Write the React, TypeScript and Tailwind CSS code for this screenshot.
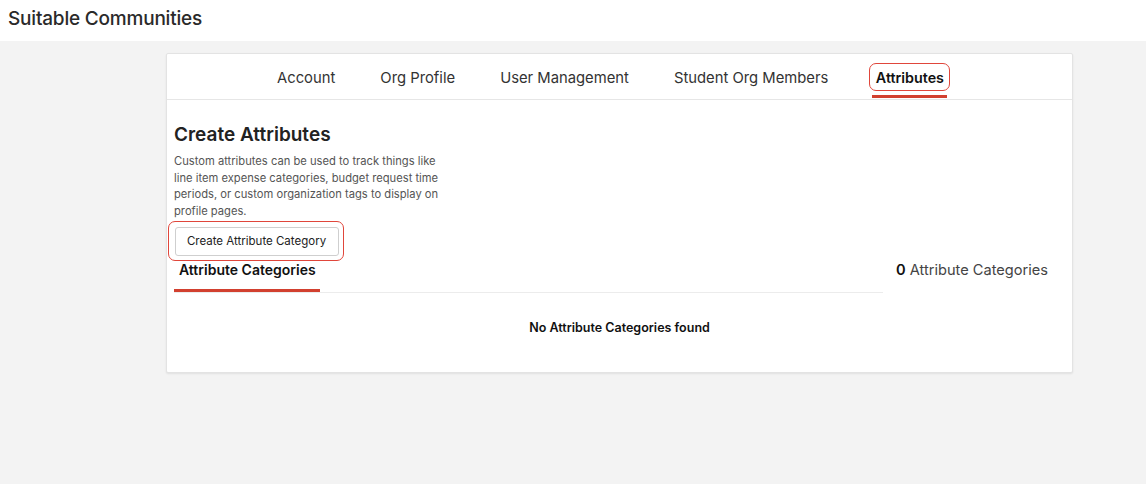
import React from "react";

const TABS = ["Account", "Org Profile", "User Management", "Student Org Members", "Attributes"];

export default function App() {
  return (
    <div className="min-h-[484px] bg-[#f3f3f3] font-['Inter',sans-serif] text-[#222]">
      {/* Top bar */}
      <header className="h-[41px] bg-white px-[8px] flex items-center">
        <h1 className="text-[19px] font-medium tracking-[-0.2px] text-[#2a2a2a] -mt-[2px]">Suitable Communities</h1>
      </header>

      <div className="pl-[166px] pr-[73px] pt-[12px]">
        <div className="bg-white border border-[#e3e3e3] rounded-[2px] shadow-[0_1px_2px_rgba(0,0,0,0.08)]">
          {/* Tabs */}
          <nav className="h-[46px] border-b border-[#e6e6e6] flex items-stretch gap-[45px] pl-[110px]">
            {TABS.map((t) => {
              const active = t === "Attributes";
              return (
                <div key={t} className="relative flex items-center">
                  {active ? (
                    <>
                      <span className="block -ml-[4px] -mr-[7px] px-[5.5px] pt-[4px] pb-[2px] leading-[20px] border-[1.5px] border-[#e0463b] rounded-[7px] text-[14.3px] font-semibold text-[#111]">
                        {t}
                      </span>
                      <span className="absolute -left-[1px] -right-[4px] bottom-[1px] h-[3px] bg-[#d2402f]" />
                    </>
                  ) : (
                    <span className="block mt-[3px] leading-[20px] text-[14.8px] text-[#333]">{t}</span>
                  )}
                </div>
              );
            })}
          </nav>

          {/* Content */}
          <div className="px-[7px] pt-[23px] pb-[35px]">
            <h2 className="text-[19px] font-semibold text-[#222] leading-[24px]">Create Attributes</h2>
            <p className="mt-[6px] w-[272px] text-[11.2px] leading-[16.5px] text-[#555]">
              Custom attributes can be used to track things like line item expense categories, budget request time
              periods, or custom organization tags to display on profile pages.
            </p>
            <div className="mt-[2px] -ml-[6px] flex w-fit pt-[5px] pb-[4px] pl-[5.5px] pr-[4.5px] border-[1.5px] border-[#e0463b] rounded-[7px]">
              <button className="h-[29px] w-[164px] border border-[#cfcfcf] rounded-[3px] bg-white text-[11.5px] text-[#222]">
                Create Attribute Category
              </button>
            </div>

            <div className="flex items-start -mt-[1px]">
              <div className="flex-1 border-b border-[#ececec]">
                <div className="w-fit">
                  <div className="px-[5px] text-[14px] font-semibold text-[#111] leading-[20px]">Attribute Categories</div>
                  <div className="mt-[9px] h-[3px] bg-[#d2402f] w-[146px]" />
                </div>
              </div>
              <div className="w-[182px] pl-[13px] text-[14.6px] text-[#444] leading-[20px]">
                <span className="font-semibold text-[#111]">0</span> Attribute Categories
              </div>
            </div>

            <div className="mt-[26px] text-center text-[12.5px] leading-[18px] font-semibold text-[#111]">
              No Attribute Categories found
            </div>
          </div>
        </div>
      </div>
    </div>
  );
}
